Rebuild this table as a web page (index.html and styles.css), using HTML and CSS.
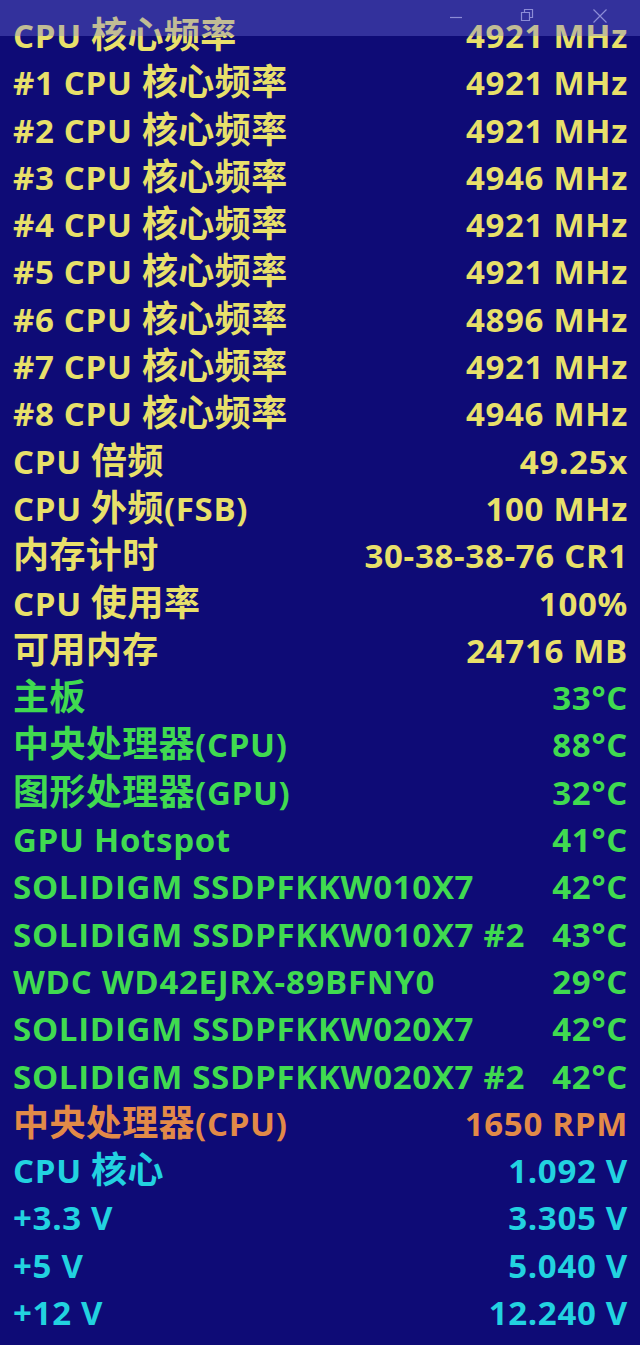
FILE: index.html
```html
<!DOCTYPE html>
<html>
<head>
<meta charset="utf-8">
<link rel="stylesheet" href="styles.css">
</head>
<body>
<div class="titlebar">
  <svg class="ctl ctl-min" width="14" height="14" viewBox="0 0 14 14"><path d="M1 7.5h12" stroke="#8c8cd6" stroke-width="1.2"/></svg>
  <svg class="ctl ctl-max" width="16" height="16" viewBox="0 0 16 16"><path d="M2.5 5.5h8v8h-8z M5.5 5.5v-3h8v8h-3" fill="none" stroke="#8c8cd6" stroke-width="1.2"/></svg>
  <svg class="ctl ctl-close" width="16" height="16" viewBox="0 0 16 16"><path d="M1.5 1.5l13 13M14.5 1.5l-13 13" stroke="#8c8cd6" stroke-width="1.2"/></svg>
</div>
<main class="list">
  <div class="row y"><span>CPU <span class="h">核心频率</span></span><span>4921 MHz</span></div>
  <div class="row y"><span>#1 CPU <span class="h">核心频率</span></span><span>4921 MHz</span></div>
  <div class="row y"><span>#2 CPU <span class="h">核心频率</span></span><span>4921 MHz</span></div>
  <div class="row y"><span>#3 CPU <span class="h">核心频率</span></span><span>4946 MHz</span></div>
  <div class="row y"><span>#4 CPU <span class="h">核心频率</span></span><span>4921 MHz</span></div>
  <div class="row y"><span>#5 CPU <span class="h">核心频率</span></span><span>4921 MHz</span></div>
  <div class="row y"><span>#6 CPU <span class="h">核心频率</span></span><span>4896 MHz</span></div>
  <div class="row y"><span>#7 CPU <span class="h">核心频率</span></span><span>4921 MHz</span></div>
  <div class="row y"><span>#8 CPU <span class="h">核心频率</span></span><span>4946 MHz</span></div>
  <div class="row y"><span>CPU <span class="h">倍频</span></span><span>49.25x</span></div>
  <div class="row y"><span>CPU <span class="h">外频</span>(FSB)</span><span>100 MHz</span></div>
  <div class="row y"><span><span class="h">内存计时</span></span><span>30-38-38-76 CR1</span></div>
  <div class="row y"><span>CPU <span class="h">使用率</span></span><span>100%</span></div>
  <div class="row y"><span><span class="h">可用内存</span></span><span>24716 MB</span></div>
  <div class="row g"><span><span class="h">主板</span></span><span>33°C</span></div>
  <div class="row g"><span><span class="h">中央处理器</span>(CPU)</span><span>88°C</span></div>
  <div class="row g"><span><span class="h">图形处理器</span>(GPU)</span><span>32°C</span></div>
  <div class="row g"><span>GPU Hotspot</span><span>41°C</span></div>
  <div class="row g"><span>SOLIDIGM SSDPFKKW010X7</span><span>42°C</span></div>
  <div class="row g"><span>SOLIDIGM SSDPFKKW010X7 #2</span><span>43°C</span></div>
  <div class="row g"><span>WDC WD42EJRX-89BFNY0</span><span>29°C</span></div>
  <div class="row g"><span>SOLIDIGM SSDPFKKW020X7</span><span>42°C</span></div>
  <div class="row g"><span>SOLIDIGM SSDPFKKW020X7 #2</span><span>42°C</span></div>
  <div class="row o"><span><span class="h">中央处理器</span>(CPU)</span><span>1650 RPM</span></div>
  <div class="row c"><span>CPU <span class="h">核心</span></span><span>1.092 V</span></div>
  <div class="row c"><span>+3.3 V</span><span>3.305 V</span></div>
  <div class="row c"><span>+5 V</span><span>5.040 V</span></div>
  <div class="row c"><span>+12 V</span><span>12.240 V</span></div>
</main>
</body>
</html>
```
FILE: styles.css
```css
html, body {
  margin: 0;
  padding: 0;
  background: #0e0b76;
}
body {
  width: 640px;
  height: 1345px;
  overflow: hidden;
  position: relative;
  font-family: "Open Sans", "Noto Sans CJK SC", sans-serif;
  font-weight: 700;
}
.titlebar {
  position: absolute;
  left: 0;
  top: 0;
  width: 640px;
  height: 36px;
  background: rgba(120, 120, 230, 0.35);
  z-index: 2;
}
.ctl { position: absolute; }
.ctl-min { left: 449px; top: 10px; }
.ctl-max { left: 519px; top: 7px; }
.ctl-close { left: 592px; top: 8px; }
.list {
  display: flex;
  flex-direction: column;
  padding: 12px 12px 0 13px;
}
.row {
  display: flex;
  justify-content: space-between;
  align-items: baseline;
  height: 47.3px;
  line-height: 47.3px;
  font-size: 33px;
  letter-spacing: 0.7px;
  white-space: nowrap;
}
.h {
  display: inline-block;
  font-family: "Noto Sans CJK SC", sans-serif;
  font-weight: 700;
  font-size: 36px;
  letter-spacing: 0.4px;
  line-height: 40px;
}
.y { color: #e8e06a; }
.g { color: #40da50; }
.o { color: #e28a48; }
.c { color: #22d2e0; }
```
